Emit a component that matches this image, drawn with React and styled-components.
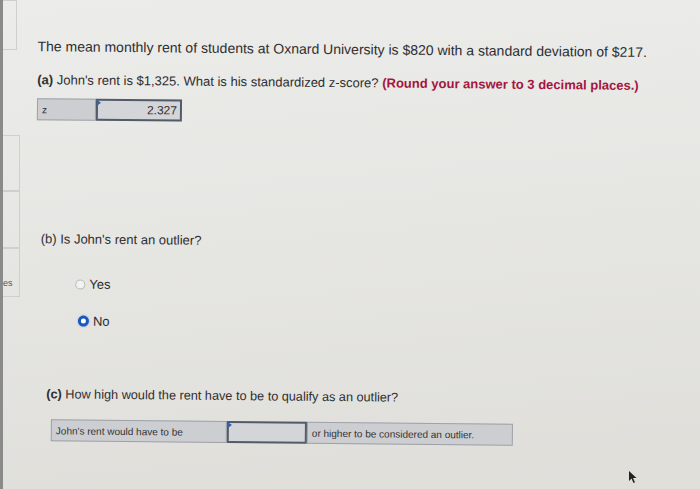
import React from "react";
import styled, { createGlobalStyle } from "styled-components";

const Global = createGlobalStyle`
  html, body { margin: 0; padding: 0; }
  body {
    width: 700px;
    height: 489px;
    overflow: hidden;
    font-family: "Liberation Sans", Arial, sans-serif;
    color: #2e2e30;
  }
`;

const Page = styled.div`
  display: flex;
  width: 700px;
  height: 489px;
  background: linear-gradient(175deg, #ececea 0%, #e6e6e3 45%, #dfded9 100%);
  position: relative;
  overflow: hidden;
`;

const Sidebar = styled.div`
  width: 18px;
  flex: none;
  border-left: 3px solid #8a8a88;
  display: flex;
  flex-direction: column;
`;

const SideBox = styled.div`
  height: ${(p) => p.$h}px;
  margin-top: ${(p) => p.$mt || 0}px;
  width: ${(p) => p.$w}px;
  border: 1px solid #cfcfcc;
  border-left: none;
  box-sizing: border-box;
  font-size: 9px;
  color: #555;
  display: flex;
  align-items: flex-end;
  padding-bottom: 8px;
`;

const Main = styled.div`
  flex: 1;
  padding: 37px 0 0 17px;
  transform: rotate(0.55deg);
  transform-origin: 0 0;
`;

const Para = styled.p`
  margin: 0 0 ${(p) => p.$mb || 0}px ${(p) => p.$ml || 0}px;
  font-size: ${(p) => p.$fs || 14}px;
  line-height: 18px;
`;

const Strong = styled.b`
  font-weight: bold;
`;

const Emph = styled.b`
  font-weight: bold;
  color: #a3163f;
`;

const Row = styled.div`
  display: flex;
  margin: 0 0 ${(p) => p.$mb || 0}px ${(p) => p.$ml || 0}px;
  height: ${(p) => p.$h}px;
`;

const Cell = styled.div`
  width: ${(p) => p.$w}px;
  box-sizing: border-box;
  background: #cdced2;
  border: 1px solid #9ea2a8;
  font-size: ${(p) => p.$fs || 10}px;
  color: #333;
  display: flex;
  align-items: center;
  padding: 0 4px;
  white-space: nowrap;
`;

const InputCell = styled.div`
  width: ${(p) => p.$w}px;
  box-sizing: border-box;
  background: #d3d5d9;
  border: 2px solid #515c68;
  font-size: 12px;
  color: #333;
  display: flex;
  align-items: center;
  justify-content: flex-end;
  padding: 0 3px;
  position: relative;
  &::before {
    content: "";
    position: absolute;
    left: -1px;
    top: -1px;
    border-left: 4px solid #2f62b0;
    border-top: 3px solid transparent;
    border-bottom: 3px solid transparent;
  }
`;

const RadioRow = styled.label`
  display: flex;
  align-items: center;
  gap: 4px;
  margin: 0 0 ${(p) => p.$mb || 0}px ${(p) => p.$ml || 0}px;
  font-size: 13px;
`;

const Radio = styled.span`
  width: ${(p) => (p.$on ? 11 : 10)}px;
  height: ${(p) => (p.$on ? 11 : 10)}px;
  border-radius: 50%;
  box-sizing: border-box;
  flex: none;
  background: ${(p) => (p.$on ? "#fff" : "#f2f2f2")};
  border: ${(p) => (p.$on ? "3px solid #1858c0" : "1px solid #b9b9b9")};
  box-shadow: ${(p) => (p.$on ? "0 0 2px rgba(40,100,220,0.5)" : "none")};
`;

const Cursor = styled.svg`
  position: absolute;
  left: 628px;
  top: 470px;
`;

export default function App() {
  return (
    <>
      <Global />
      <Page>
        <Sidebar>
          <SideBox $h={50} $w={14} />
          <SideBox $h={56} $mt={85} $w={17} />
          <SideBox $h={57} $w={17} />
          <SideBox $h={49} $w={17}>es</SideBox>
        </Sidebar>
        <Main>
          <Para $mb={16}>
            The mean monthly rent of students at Oxnard University is $820 with a standard deviation of $217.
          </Para>
          <Para $fs={13} $mb={9}>
            <Strong>(a)</Strong> John's rent is $1,325. What is his standardized z-score?{" "}
            <Emph>(Round your answer to 3 decimal places.)</Emph>
          </Para>
          <Row $h={22} $ml={0} $mb={110}>
            <Cell $w={59} $fs={10}>z</Cell>
            <InputCell $w={86}>2.327</InputCell>
          </Row>
          <Para $ml={5} $fs={13} $mb={28}>
            (b) Is John's rent an outlier?
          </Para>
          <RadioRow $ml={40} $mb={22}>
            <Radio /> Yes
          </RadioRow>
          <RadioRow $ml={43} $mb={57}>
            <Radio $on /> No
          </RadioRow>
          <Para $ml={12} $fs={12.7} $mb={16}>
            <Strong>(c)</Strong> How high would the rent have to be to qualify as an outlier?
          </Para>
          <Row $h={22} $ml={17}>
            <Cell $w={176}>John's rent would have to be</Cell>
            <InputCell $w={80} />
            <Cell $w={206}>or higher to be considered an outlier.</Cell>
          </Row>
        </Main>
        <Cursor width="10" height="14" viewBox="0 0 10 14">
          <path d="M1 1 L1 11 L3.5 8.5 L5.5 13 L7 12.3 L5 8 L8.5 8 Z" fill="#222" />
        </Cursor>
      </Page>
    </>
  );
}
